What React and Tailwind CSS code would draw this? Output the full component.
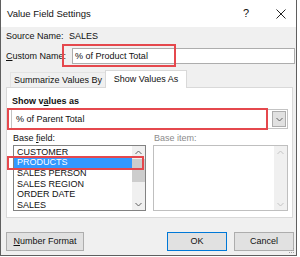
import React from 'react';

function Chevron({ up = false, color = '#606060' }) {
  return (
    <svg width="7" height="5" viewBox="0 0 7 5">
      <path d={up ? 'M0.5 4 L3.5 1 L6.5 4' : 'M0.5 1 L3.5 4 L6.5 1'} fill="none" stroke={color} strokeWidth="1" />
    </svg>
  );
}

function ScrollBar({ disabled = false }) {
  const c = disabled ? '#c4c4c4' : '#606060';
  return (
    <div className="w-[13px] h-full bg-[#f0f0f0] flex flex-col items-center">
      <div className="h-[12px] flex items-center justify-center">
        <Chevron up color={c} />
      </div>
      {disabled ? (
        <div className="flex-1" />
      ) : (
        <div className="flex-1 w-full flex flex-col">
          <div className="h-[1px]" />
          <div className="h-[23px] w-full bg-[#cdcdcd]" />
          <div className="flex-1" />
        </div>
      )}
      <div className="h-[12px] flex items-center justify-center">
        <Chevron color={c} />
      </div>
    </div>
  );
}

export default function App() {
  const fields = ['CUSTOMER', 'PRODUCTS', 'SALES PERSON', 'SALES REGION', 'ORDER DATE', 'SALES'];

  return (
    <div className="w-[300px] h-[257px] bg-white text-[9px] text-[#111] leading-none" style={{ fontFamily: '"Liberation Sans", Arial, sans-serif' }}>
      <div className="w-[297px] h-[256px] border-l border-r border-b border-[#5f5f5f] flex flex-col">
        {/* Title bar */}
        <div className="h-[27px] bg-white flex items-center pl-[6px] shrink-0">
          <span className="text-[9.5px]">Value Field Settings</span>
          <span className="ml-auto text-[11px] w-[10px] text-center">?</span>
          <span className="ml-[25px] mr-[10px] w-[10px] h-[10px] flex items-center justify-center">
            <svg width="10" height="10" viewBox="0 0 10 10">
              <path d="M0.5 0.5 L9.5 9.5 M9.5 0.5 L0.5 9.5" stroke="#222" strokeWidth="1" />
            </svg>
          </span>
        </div>

        {/* Body */}
        <div className="relative flex-1 bg-[#f0f0f0] flex flex-col">
          <div className="mt-[4px] h-[10px] flex items-center pl-[5px]">
            <span className="w-[63px]">Source Name:</span>
            <span>SALES</span>
          </div>

          <div className="mt-[7px] h-[16px] flex items-center pl-[5px]">
            <span className="w-[66px]"><u>C</u>ustom Name:</span>
            <div className="relative w-[223px] h-[16px] bg-white border border-[#adadad] flex items-center pl-[2px]">
              % of Product Total
              <div className="absolute left-[-11px] top-[-5px] w-[114px] h-[23px] border-2 border-[#e5484d]" />
            </div>
          </div>

          {/* Tabs */}
          <div className="mt-[6px] h-[17px] flex items-end pl-[9px]">
            <div className="w-[95px] h-[15px] border-t border-l border-[#e3e3e3] flex items-center justify-center">
              Summarize Values By
            </div>
            <div className="relative z-10 w-[82px] h-[18px] -mb-[1px] bg-white border border-b-0 border-[#d9d9d9] flex items-center justify-center">
              Show Values As
            </div>
          </div>

          {/* Panel */}
          <div className="ml-[5px] w-[287px] h-[131px] bg-white border border-[#d9d9d9] flex flex-col pl-[5px]">
            <div className="mt-[8px] h-[10px] flex items-center font-bold">
              Show v<u>a</u>lues as
            </div>
            <div className="relative mt-[3px] ml-[-1px] w-[277px] h-[20px] bg-white border border-[#c3c3c3] flex items-center">
              <span className="pl-[4px]">% of Parent Total</span>
              <div className="ml-auto mr-[1px] w-[14px] h-[16px] bg-[#e1e1e1] border border-[#adadad] flex items-center justify-center">
                <Chevron />
              </div>
              <div className="absolute left-[-5px] top-[-2px] w-[261px] h-[22px] border-2 border-[#e5484d]" />
            </div>

            <div className="mt-[4px] h-[10px] flex items-center pl-[1px]">
              <span className="w-[141px]">Base <u>f</u>ield:</span>
              <span className="text-[#8c8c8c]">Base item:</span>
            </div>

            <div className="mt-[2px] flex gap-[7px] pl-[1px]">
              <div className="relative w-[133px] h-[66px] border border-[#828282] flex">
                <div className="flex-1 pt-[1px]">
                  {fields.map((f) => (
                    <div
                      key={f}
                      className={`h-[10.6px] flex items-center pl-[3px] ${f === 'PRODUCTS' ? 'bg-[#3399ff] text-white' : ''}`}
                    >
                      {f}
                    </div>
                  ))}
                </div>
                <ScrollBar />
                <div className="absolute left-[-7px] top-[10px] w-[137px] h-[14px] border-2 border-[#e5484d]" />
              </div>
              <div className="w-[135px] h-[66px] border border-[#bfbfbf] flex">
                <div className="flex-1" />
                <ScrollBar disabled />
              </div>
            </div>
          </div>

          {/* Buttons */}
          <div className="mt-[14px] h-[19px] flex pl-[5px]">
            <div className="w-[78px] h-[19px] bg-[#e1e1e1] border border-[#adadad] flex items-center justify-center">
              <span><u>N</u>umber Format</span>
            </div>
            <div className="ml-[83px] w-[60px] h-[19px] bg-[#e1e1e1] border border-[#0078d7] flex items-center justify-center">
              OK
            </div>
            <div className="ml-[7px] w-[60px] h-[19px] bg-[#e1e1e1] border border-[#adadad] flex items-center justify-center">
              Cancel
            </div>
          </div>

          <svg className="absolute right-[1px] bottom-[1px]" width="6" height="6" viewBox="0 0 6 6">
            <rect x="4" y="0" width="1" height="1" fill="#a0a0a0" />
            <rect x="2" y="2" width="1" height="1" fill="#a0a0a0" />
            <rect x="4" y="2" width="1" height="1" fill="#a0a0a0" />
            <rect x="0" y="4" width="1" height="1" fill="#a0a0a0" />
            <rect x="2" y="4" width="1" height="1" fill="#a0a0a0" />
            <rect x="4" y="4" width="1" height="1" fill="#a0a0a0" />
          </svg>
        </div>
      </div>
    </div>
  );
}
